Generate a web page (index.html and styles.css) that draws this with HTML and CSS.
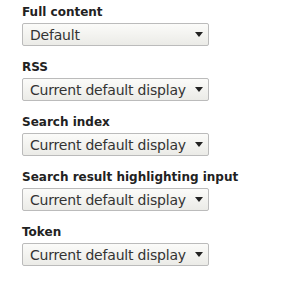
FILE: index.html
```html
<!DOCTYPE html>
<html lang="en">
<head>
    <meta charset="UTF-8">
    <title>Display modes</title>
    <link rel="stylesheet" href="styles.css">
</head>
<body>
    <div class="form">
        <div class="form-item">
            <label>Full content</label>
            <div class="select">Default<span class="arrow"></span></div>
        </div>
        <div class="form-item">
            <label>RSS</label>
            <div class="select">Current default display<span class="arrow"></span></div>
        </div>
        <div class="form-item">
            <label>Search index</label>
            <div class="select">Current default display<span class="arrow"></span></div>
        </div>
        <div class="form-item">
            <label>Search result highlighting input</label>
            <div class="select">Current default display<span class="arrow"></span></div>
        </div>
        <div class="form-item">
            <label>Token</label>
            <div class="select">Current default display<span class="arrow"></span></div>
        </div>
    </div>
</body>
</html>
```
FILE: styles.css
```css
body {
    margin: 0;
    background: #fff;
    font-family: "DejaVu Sans", Verdana, sans-serif;
    color: #333;
}

.form {
    padding: 5px 0 0 22px;
    display: flex;
    flex-direction: column;
    gap: 14px;
}

.form-item label {
    display: block;
    font-size: 12px;
    font-weight: bold;
    color: #222;
    line-height: 14px;
    margin-bottom: 4px;
}

.select {
    box-sizing: border-box;
    width: 187px;
    height: 23px;
    display: flex;
    align-items: center;
    justify-content: space-between;
    padding: 0 5px 0 7px;
    font-size: 14px;
    letter-spacing: -0.2px;
    color: #333;
    border: 1px solid #bbb;
    border-radius: 2px;
    background: linear-gradient(#fbfbf9, #ebebe7);
}

.arrow {
    width: 0;
    height: 0;
    border-left: 4.5px solid transparent;
    border-right: 4.5px solid transparent;
    border-top: 5px solid #222;
}
```
